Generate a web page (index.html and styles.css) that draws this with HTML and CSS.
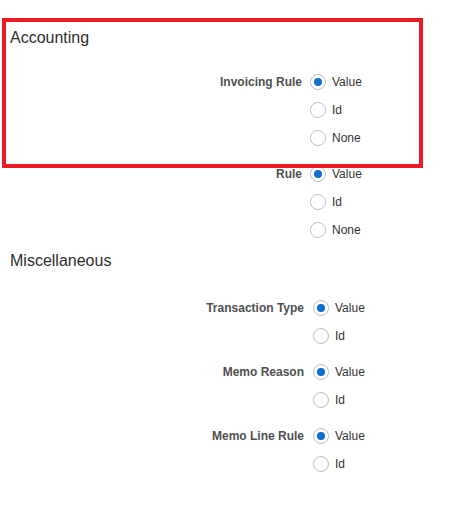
FILE: index.html
```html
<!DOCTYPE html>
<html>
<head>
<meta charset="utf-8">
<link rel="stylesheet" href="styles.css">
</head>
<body>
<div class="page">
  <section class="section section-first">
    <h2 class="section-title">Accounting</h2>
    <div class="fields">
      <div class="field">
        <div class="field-label">Invoicing Rule</div>
        <div class="options">
          <label class="option"><span class="radio checked"></span><span class="option-text">Value</span></label>
          <label class="option"><span class="radio"></span><span class="option-text">Id</span></label>
          <label class="option"><span class="radio"></span><span class="option-text">None</span></label>
        </div>
      </div>
      <div class="field">
        <div class="field-label">Rule</div>
        <div class="options">
          <label class="option"><span class="radio checked"></span><span class="option-text">Value</span></label>
          <label class="option"><span class="radio"></span><span class="option-text">Id</span></label>
          <label class="option"><span class="radio"></span><span class="option-text">None</span></label>
        </div>
      </div>
    </div>
  </section>

  <section class="section section-misc">
    <h2 class="section-title">Miscellaneous</h2>
    <div class="fields fields-misc">
      <div class="field">
        <div class="field-label">Transaction Type</div>
        <div class="options">
          <label class="option"><span class="radio checked"></span><span class="option-text">Value</span></label>
          <label class="option"><span class="radio"></span><span class="option-text">Id</span></label>
        </div>
      </div>
      <div class="field">
        <div class="field-label">Memo Reason</div>
        <div class="options">
          <label class="option"><span class="radio checked"></span><span class="option-text">Value</span></label>
          <label class="option"><span class="radio"></span><span class="option-text">Id</span></label>
        </div>
      </div>
      <div class="field">
        <div class="field-label">Memo Line Rule</div>
        <div class="options">
          <label class="option"><span class="radio checked"></span><span class="option-text">Value</span></label>
          <label class="option"><span class="radio"></span><span class="option-text">Id</span></label>
        </div>
      </div>
    </div>
  </section>

  <div class="highlight"></div>
</div>
</body>
</html>
```

FILE: styles.css
```css
* { box-sizing: border-box; }

html, body {
  margin: 0;
  padding: 0;
  background: #ffffff;
}

body {
  font-family: "Liberation Sans", Arial, sans-serif;
  color: #333333;
}

.page {
  position: relative;
  width: 466px;
  min-height: 512px;
}

.section-first {
  padding-top: 28px;
}

.section-misc {
  margin-top: 7px;
}

.section-title {
  margin: 0;
  padding-left: 10px;
  font-size: 16px;
  line-height: 20px;
  font-weight: normal;
  color: #2e2e2e;
}

.fields {
  margin-top: 20px;
  display: flex;
  flex-direction: column;
  gap: 8px;
}

.field {
  display: grid;
  grid-template-columns: 302px auto;
  column-gap: 8px;
}

.fields-misc {
  margin-top: 23px;
}

.fields-misc .field {
  grid-template-columns: 304px auto;
  column-gap: 9px;
}

.field-label {
  text-align: right;
  font-size: 12px;
  line-height: 28px;
  font-weight: bold;
  color: #505050;
}

.options {
  display: flex;
  flex-direction: column;
}

.option {
  display: flex;
  align-items: center;
  gap: 6px;
  height: 28px;
  font-size: 12px;
  color: #333333;
}

.radio {
  width: 16px;
  height: 16px;
  border-radius: 50%;
  border: 1px solid #b9bfc5;
  background: #ffffff;
  display: flex;
  align-items: center;
  justify-content: center;
  flex: none;
}

.radio.checked::after {
  content: "";
  width: 8px;
  height: 8px;
  border-radius: 50%;
  background: #0b6fd0;
}

.highlight {
  position: absolute;
  left: 2px;
  top: 18px;
  width: 421px;
  height: 150px;
  border: 4px solid #ed1c24;
  pointer-events: none;
}
```
